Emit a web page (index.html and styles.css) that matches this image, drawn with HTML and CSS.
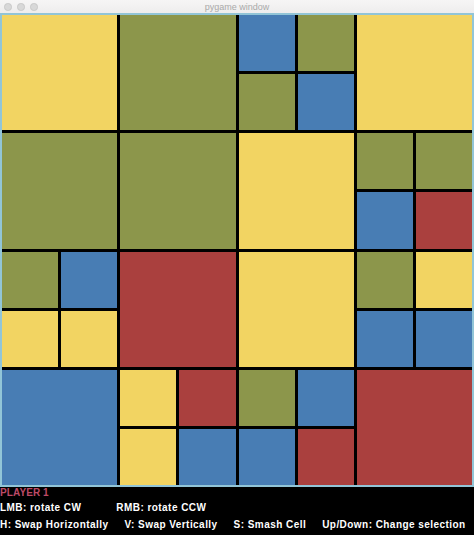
FILE: index.html
```html
<!DOCTYPE html>
<html lang="en">
<head>
<meta charset="utf-8">
<title>pygame window</title>
<link rel="stylesheet" href="styles.css">
</head>
<body>
<div class="window">
  <div class="titlebar">
    <div class="lights">
      <span class="light"></span>
      <span class="light"></span>
      <span class="light"></span>
    </div>
    <div class="title">pygame window</div>
    <div class="spacer"></div>
  </div>

  <div class="board">
    <div class="block yellow" style="grid-area: 1 / 1 / span 2 / span 2"></div>
    <div class="block olive"  style="grid-area: 1 / 3 / span 2 / span 2"></div>
    <div class="block blue"   style="grid-area: 1 / 5"></div>
    <div class="block olive"  style="grid-area: 1 / 6"></div>
    <div class="block olive"  style="grid-area: 2 / 5"></div>
    <div class="block blue"   style="grid-area: 2 / 6"></div>
    <div class="block yellow" style="grid-area: 1 / 7 / span 2 / span 2"></div>

    <div class="block olive"  style="grid-area: 3 / 1 / span 2 / span 2"></div>
    <div class="block olive"  style="grid-area: 3 / 3 / span 2 / span 2"></div>
    <div class="block yellow" style="grid-area: 3 / 5 / span 2 / span 2"></div>
    <div class="block olive"  style="grid-area: 3 / 7"></div>
    <div class="block olive"  style="grid-area: 3 / 8"></div>
    <div class="block blue"   style="grid-area: 4 / 7"></div>
    <div class="block red"    style="grid-area: 4 / 8"></div>

    <div class="block olive"  style="grid-area: 5 / 1"></div>
    <div class="block blue"   style="grid-area: 5 / 2"></div>
    <div class="block yellow" style="grid-area: 6 / 1"></div>
    <div class="block yellow" style="grid-area: 6 / 2"></div>
    <div class="block red"    style="grid-area: 5 / 3 / span 2 / span 2"></div>
    <div class="block yellow" style="grid-area: 5 / 5 / span 2 / span 2"></div>
    <div class="block olive"  style="grid-area: 5 / 7"></div>
    <div class="block yellow" style="grid-area: 5 / 8"></div>
    <div class="block blue"   style="grid-area: 6 / 7"></div>
    <div class="block blue"   style="grid-area: 6 / 8"></div>

    <div class="block blue"   style="grid-area: 7 / 1 / span 2 / span 2"></div>
    <div class="block yellow" style="grid-area: 7 / 3"></div>
    <div class="block red"    style="grid-area: 7 / 4"></div>
    <div class="block yellow" style="grid-area: 8 / 3"></div>
    <div class="block blue"   style="grid-area: 8 / 4"></div>
    <div class="block olive"  style="grid-area: 7 / 5"></div>
    <div class="block blue"   style="grid-area: 7 / 6"></div>
    <div class="block blue"   style="grid-area: 8 / 5"></div>
    <div class="block red"    style="grid-area: 8 / 6"></div>
    <div class="block red"    style="grid-area: 7 / 7 / span 2 / span 2"></div>
  </div>

  <div class="footer">
    <div class="player">PLAYER 1</div>
    <div class="keys keys-mouse">
      <span>LMB: rotate CW</span>
      <span>RMB: rotate CCW</span>
    </div>
    <div class="keys keys-board">
      <span>H: Swap Horizontally</span>
      <span>V: Swap Vertically</span>
      <span>S: Smash Cell</span>
      <span>Up/Down: Change selection</span>
    </div>
  </div>
</div>
</body>
</html>
```

FILE: styles.css
```css
* {
  box-sizing: border-box;
}

html, body {
  margin: 0;
  padding: 0;
  background: #000;
}

.window {
  width: 474px;
  height: 535px;
  display: flex;
  flex-direction: column;
  overflow: hidden;
  font-family: "Liberation Sans", Arial, sans-serif;
}

.titlebar {
  height: 13px;
  flex: 0 0 13px;
  background: linear-gradient(#f6f5f5, #eeeded);
  display: grid;
  grid-template-columns: 1fr auto 1fr;
  align-items: center;
}

.lights {
  display: flex;
  gap: 5.5px;
  padding-left: 4px;
  align-items: center;
}

.light {
  width: 7.5px;
  height: 7.5px;
  border-radius: 50%;
  background: #d8d8d8;
  border: 0.5px solid #c9c9c9;
}

.title {
  font-size: 9px;
  line-height: 13px;
  color: #a9a9a9;
  padding-top: 1px;
}

.board {
  width: 474px;
  height: 474px;
  flex: 0 0 474px;
  background: #000;
  padding: 1.5px;
  display: grid;
  grid-template-columns: repeat(8, 1fr);
  grid-template-rows: repeat(8, 1fr);
  gap: 3px;
  outline: 2px solid #92c5d7;
  outline-offset: -2px;
}

.block.yellow { background: #f2d462; }
.block.olive  { background: #8c964b; }
.block.blue   { background: #487db4; }
.block.red    { background: #aa403e; }

.footer {
  flex: 1 1 auto;
  background: #000;
  color: #fff;
  font-weight: bold;
  font-size: 10px;
  letter-spacing: 0.45px;
}

.player {
  line-height: 11px;
  color: #bd4a66;
  letter-spacing: 0.1px;
}

.keys {
  display: flex;
  line-height: 16px;
  white-space: nowrap;
}

.keys-mouse {
  margin-top: 2px;
  gap: 35px;
}

.keys-board {
  margin-top: 1px;
  gap: 16px;
}
```
